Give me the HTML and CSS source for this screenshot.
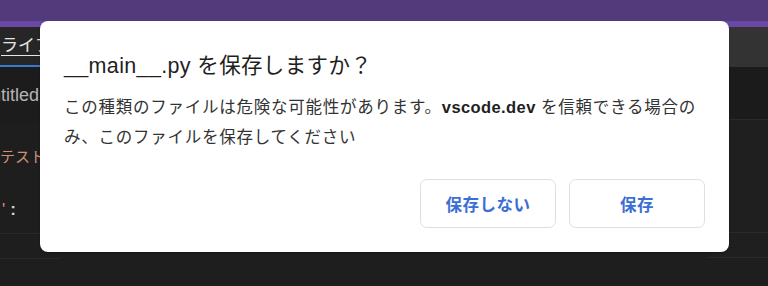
FILE: index.html
```html
<!DOCTYPE html>
<html lang="ja">
<head>
<meta charset="utf-8">
<link rel="stylesheet" href="styles.css">
</head>
<body>
<div class="app">
  <div class="titlebar"></div>
  <div class="accent"></div>
  <div class="tabs">
    <div class="tab"><span class="tab-label">ライブラリ</span></div>
    <div class="tab-rest"></div>
  </div>
  <div class="editor">
    <div class="gutter">
      <div class="row r1"><span class="muted">Untitled</span></div>
      <div class="row r2"><span class="str">テスト</span></div>
      <div class="row r3"><span class="str">'</span><span class="punc">:</span></div>
      <div class="row r4"></div>
      <div class="row r5"></div>
    </div>
    <div class="fill"></div>
    <div class="right">
      <div class="rrow rr1"></div>
      <div class="rrow rr2"></div>
      <div class="rrow rr3"></div>
      <div class="rrow rr4"></div>
    </div>
  </div>
</div>

<div class="dialog" role="dialog">
  <h1 class="title">__main__.py を保存しますか？</h1>
  <p class="message">この種類のファイルは危険な可能性があります。<b>vscode.dev</b> を信頼できる場合のみ、このファイルを保存してください</p>
  <div class="actions">
    <button class="btn">保存しない</button>
    <button class="btn">保存</button>
  </div>
</div>
</body>
</html>
```

FILE: styles.css
```css
html, body {
  margin: 0;
  padding: 0;
  width: 768px;
  height: 286px;
  overflow: hidden;
  background: #1e1e1e;
  font-family: "Liberation Sans", "Noto Sans CJK JP", sans-serif;
}

.app {
  display: flex;
  flex-direction: column;
  width: 768px;
  height: 286px;
}

.titlebar {
  height: 21px;
  background: #523a7b;
}

.accent {
  height: 6px;
  background: #6a48a6;
}

.tabs {
  display: flex;
  height: 40px;
  background: #333333;
}

.tab {
  width: 60px;
  overflow: hidden;
  background: #262626;
  border-bottom: 2px solid #3a78d6;
  box-sizing: border-box;
  display: flex;
  align-items: center;
  justify-content: flex-start;
}

.tab-label {
  color: #e6e6e6;
  font-size: 17px;
  white-space: nowrap;
  text-decoration: underline;
  text-underline-offset: 4px;
  line-height: 20px;
  margin-left: 1px;
}

.tab-rest {
  flex: 1;
}

.editor {
  flex: 1;
  display: flex;
}

.gutter {
  width: 60px;
  overflow: hidden;
  display: flex;
  flex-direction: column;
  background: #1e1e1e;
}

.row {
  display: flex;
  align-items: center;
  white-space: nowrap;
  font-size: 17px;
}

.r1 {
  height: 56px;
  justify-content: flex-end;
  padding-right: 21px;
  background: #1c1c1c;
  font-size: 18px;
}

.r2 {
  height: 64px;
  font-size: 15px;
}

.r3 {
  height: 46px;
  padding-left: 2px;
  border-bottom: 1px solid #2a2a2a;
}

.r4 {
  height: 24px;
  border-bottom: 1px solid #2a2a2a;
}

.r5 {
  flex: 1;
}

.muted { color: #b4b4b4; }
.str { color: #ce9178; }
.punc { color: #d4d4d4; margin-left: 5px; font-weight: bold; }

.fill {
  flex: 1;
}

.right {
  width: 60px;
  display: flex;
  flex-direction: column;
}

.rrow { border-bottom: 1px solid #2a2a2a; }
.rr1 { height: 52px; background: #1b1b1b; }
.rr2 { height: 112px; background: #1f1f1f; }
.rr3 { height: 24px; background: #1f1f1f; }
.rr4 { flex: 1; border-bottom: none; }

.dialog {
  position: absolute;
  left: 40px;
  top: 21px;
  width: 689px;
  height: 231px;
  box-sizing: border-box;
  padding: 24px;
  background: #ffffff;
  border-radius: 8px;
  display: flex;
  flex-direction: column;
  box-shadow: 0 1px 2px rgba(0, 0, 0, 0.35);
}

.title {
  margin: 0;
  font-size: 21.5px;
  font-weight: normal;
  line-height: 42px;
  color: #1f1f1f;
  letter-spacing: 0.35px;
}

.message {
  margin: 5px 0 0 0;
  font-size: 16.5px;
  line-height: 30px;
  color: #333333;
  letter-spacing: 0.75px;
}

.message b {
  font-weight: bold;
  color: #1f1f1f;
  letter-spacing: 0.4px;
}

.actions {
  margin-top: auto;
  display: flex;
  justify-content: flex-end;
  gap: 13px;
}

.btn {
  width: 136px;
  height: 49px;
  background: #ffffff;
  border: 1px solid #dedfe3;
  border-radius: 7px;
  color: #3b6fd6;
  font-family: "Liberation Sans", "Noto Sans CJK JP", sans-serif;
  font-size: 16.5px;
  font-weight: bold;
  letter-spacing: 0.5px;
  padding: 0;
}
```
